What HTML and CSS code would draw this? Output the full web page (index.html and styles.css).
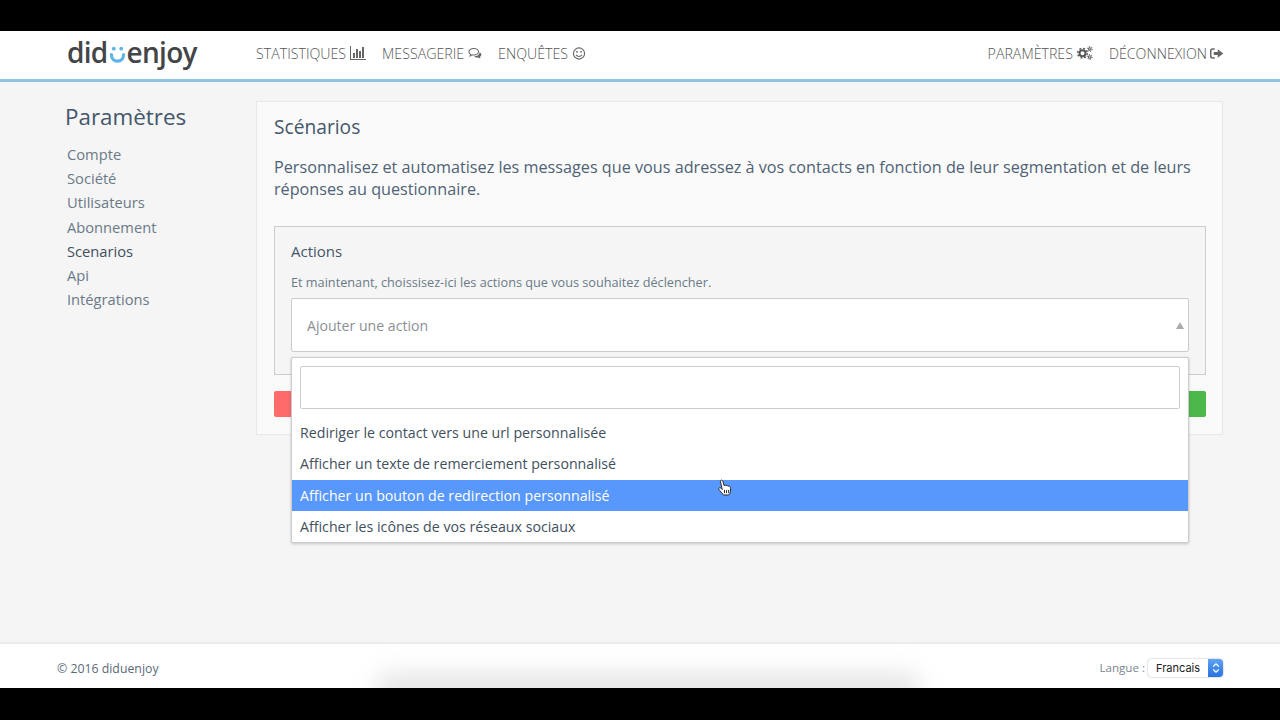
FILE: index.html
```html
<!DOCTYPE html>
<html lang="fr">
<head>
<meta charset="utf-8">
<title>Scénarios</title>
<link rel="stylesheet" href="styles.css">
</head>
<body>
<div class="bar-top"></div>
<header class="header">
  <a class="logo">did<svg class="logo-u" viewBox="0 0 16 16" width="17" height="17"><circle cx="4.500" cy="2.500" r="1.800" fill="#5bb5e6"/><circle cx="11.500" cy="2.500" r="1.800" fill="#5bb5e6"/><path d="M2.300 8c0 3.800 2.300 6.200 5.700 6.200s5.700-2.400 5.700-6.200" fill="none" stroke="#5bb5e6" stroke-width="3" stroke-linecap="round"/></svg>enjoy</a>
  <nav class="nav nav-left">
    <a>Statistiques <svg class="ico" viewBox="0 0 16 14"><path d="M0 0h1v13h15v1H0z M3 7h2v5H3z M6 3h2v9H6z M9 5h2v7H9z M12 1h2v11h-2z" fill="#666"/></svg></a>
    <a>Messagerie <svg class="ico ico-s" viewBox="0 0 16 14"><path d="M6.500 1.200C3.400 1.200 1 2.900 1 5c0 1.200.8 2.300 2 3l-.6 1.800L4.800 8.600c.5.100 1.100.2 1.700.2 3.100 0 5.500-1.700 5.500-3.800s-2.400-3.800-5.500-3.800z" fill="none" stroke="#666" stroke-width="1.200"/><path d="M13 5.500c1.300.6 2.300 1.700 2.300 3 0 1.100-.7 2-1.700 2.600l.6 1.900-2.500-1.300c-2 .3-3.900-.3-5-1.500 3 .3 6.600-1.600 6.300-4.700z" fill="#666"/></svg></a>
    <a>Enquêtes <svg class="ico ico-s" viewBox="0 0 14 14"><circle cx="7" cy="7" r="6" fill="none" stroke="#666" stroke-width="1.200"/><circle cx="4.800" cy="5.200" r="1" fill="#666"/><circle cx="9.200" cy="5.200" r="1" fill="#666"/><path d="M3.800 8.500c1.500 2.200 4.900 2.200 6.400 0" fill="none" stroke="#666" stroke-width="1.100"/></svg></a>
  </nav>
  <nav class="nav nav-right">
    <a>Paramètres <svg class="ico" viewBox="0 0 16 14"><circle cx="5.500" cy="7.200" r="3" fill="none" stroke="#555" stroke-width="2"/><circle cx="5.500" cy="7.200" r="4.800" fill="none" stroke="#555" stroke-width="1.500" stroke-dasharray="1.900 1.870"/><circle cx="12.800" cy="3" r="1.300" fill="none" stroke="#555" stroke-width="1.100"/><circle cx="12.800" cy="3" r="2.500" fill="none" stroke="#555" stroke-width="1" stroke-dasharray="1.100 1.520"/><circle cx="12.800" cy="11" r="1.300" fill="none" stroke="#555" stroke-width="1.100"/><circle cx="12.800" cy="11" r="2.500" fill="none" stroke="#555" stroke-width="1" stroke-dasharray="1.100 1.520"/></svg></a>
    <a class="tight">Déconnexion <svg class="ico ico-s" viewBox="1 0 14 14"><path d="M5.500 2.200H3.200C2 2.200 1.200 3 1.200 4.200v5.600c0 1.200.8 2 2 2h2.300" fill="none" stroke="#666" stroke-width="1.700"/><path d="M4.500 5.300h4.300V2.400L14.800 7l-6 4.600V8.700H4.500z" fill="#666"/></svg></a>
  </nav>
</header>
<div class="main">
  <aside class="side">
    <h2 class="side-title">Paramètres</h2>
    <ul class="side-menu">
      <li>Compte</li>
      <li>Société</li>
      <li>Utilisateurs</li>
      <li>Abonnement</li>
      <li class="current">Scenarios</li>
      <li>Api</li>
      <li>Intégrations</li>
    </ul>
  </aside>
  <section class="panel">
    <h3 class="panel-title">Scénarios</h3>
    <p class="lead">Personnalisez et automatisez les messages que vous adressez à vos contacts en fonction de leur segmentation et de leurs réponses au questionnaire.</p>
    <div class="box">
      <h4 class="box-title">Actions</h4>
      <p class="help">Et maintenant, choissisez-ici les actions que vous souhaitez déclencher.</p>
      <div class="select">
        <span class="placeholder">Ajouter une action</span>
        <span class="caret"></span>
      </div>
      <div class="dropdown">
        <div class="search"></div>
        <ul class="options">
          <li>Rediriger le contact vers une url personnalisée</li>
          <li>Afficher un texte de remerciement personnalisé</li>
          <li class="active">Afficher un bouton de redirection personnalisé</li>
          <li>Afficher les icônes de vos réseaux sociaux</li>
        </ul>
      </div>
    </div>
    <div class="buttons">
      <span class="btn btn-red"></span>
      <span class="btn btn-green"></span>
    </div>
  </section>
</div>
<footer class="footer">
  <span class="copy">© 2016 diduenjoy</span>
  <div class="lang">
    <span class="lang-label">Langue :</span>
    <div class="lang-select"><span class="lang-value">Francais</span><span class="lang-arrows"><svg viewBox="0 0 8 12" width="8" height="12"><path d="M1.200 4.500L4 1.800l2.800 2.700M1.200 7.500L4 10.200l2.800-2.700" fill="none" stroke="#fff" stroke-width="1.300"/></svg></span></div>
  </div>
  <div class="footer-shadow"></div>
</footer>
<div class="bar-bottom"></div>
<svg class="cursor" viewBox="0 0 16 20" width="15" height="19"><path d="M4.200 1.200c.9-.5 1.700 0 2 .9l1.300 4.700 1.800-.3 1.700.4 1.700.6c1.100.4 1.800 1.200 1.800 2.300l-.2 3.500c-.2 1.500-.8 2.700-1.700 3.600H6.800c-.9-1.300-2.600-3.300-4.300-5.300-.8-.9-.8-1.700-.2-2.200.7-.5 1.600-.2 2.400.6L5.600 11 3.700 3c-.2-.8-.1-1.400.5-1.800z" fill="#fff" stroke="#222" stroke-width="1"/><path d="M8 11.500v3.500M10.200 11.500v3.500M12.400 11.500v3.500" stroke="#222" stroke-width="1"/></svg>
</body>
</html>
```

FILE: styles.css
```css
* { box-sizing: border-box; }
html, body { margin: 0; padding: 0; }
body {
  width: 1280px;
  height: 720px;
  overflow: hidden;
  display: flex;
  flex-direction: column;
  position: relative;
  background: #f5f5f5;
  font-family: "Open Sans", "Noto Sans", sans-serif;
  color: #4a5a6a;
}
ul { list-style: none; margin: 0; padding: 0; }
h2, h3, h4, p { margin: 0; font-weight: 400; }

.bar-top { height: 31px; background: #000; flex: none; }
.bar-bottom { height: 32px; background: #000; flex: none; }

.header {
  flex: none;
  height: 51px;
  background: #fff;
  border-bottom: 3px solid #90c2e2;
  display: flex;
  align-items: center;
  padding: 0 56px 4px 67px;
}
.logo {
  width: 189px;
  font-size: 28px;
  font-weight: 600;
  letter-spacing: -0.7px;
  color: #444547;
  display: flex;
  align-items: baseline;
  line-height: 1;
  margin-top: -2px;
}
.logo-u { margin: 0 1px 0 1px; }
.nav { display: flex; gap: 16px; font-size: 14.200px; font-weight: 300; color: #555; text-transform: uppercase; }
.nav a { display: flex; align-items: center; gap: 4px; white-space: nowrap; }
.nav a.tight { gap: 3px; }
.nav-right { margin-left: auto; gap: 16px; }
.ico { width: 16px; height: 14px; }
.ico-s { width: 14px; height: 13px; }

.main { flex: 1; display: flex; padding: 20px 57px 0 65px; align-items: flex-start; }
.side { width: 191px; flex: none; }
.side-title { font-size: 22.400px; line-height: 30px; color: #44566a; }
.side-menu { margin: 10px 0 0 2px; font-size: 14.700px; line-height: 24.200px; color: #6a7a88; }
.side-menu .current { color: #3f4f5e; }

.panel {
  width: 967px;
  height: 334px;
  margin-top: -1px;
  background: #fafafa;
  border: 1px solid #e8e8e8;
  padding: 0 16px 0 17px;
}
.panel-title { font-size: 19.200px; line-height: 26px; margin-top: 12px; color: #44566a; }
.lead { font-size: 16.200px; line-height: 22px; margin-top: 16px; color: #4f6275; }
.box {
  position: relative;
  height: 149px;
  margin-top: 26px;
  background: #f5f5f5;
  border: 1px solid #ccc;
  padding: 0 16px;
}
.box-title { font-size: 15px; line-height: 20px; margin-top: 14px; color: #44566a; }
.help { font-size: 12.700px; line-height: 18px; margin-top: 12px; color: #6a7a88; }
.select {
  height: 54px;
  margin-top: 7px;
  background: #fff;
  border: 1px solid #ccc;
  border-radius: 2px;
  display: flex;
  align-items: center;
  justify-content: space-between;
  padding: 0 4px 0 15px;
}
.placeholder { font-size: 14.100px; color: #8a8f94; }
.caret {
  width: 0;
  height: 0;
  border-left: 4px solid transparent;
  border-right: 4px solid transparent;
  border-bottom: 7px solid #aaa;
}
.dropdown {
  position: absolute;
  left: 16px;
  top: 130px;
  width: 898px;
  height: 186px;
  background: #fff;
  border: 1px solid #ccc;
  border-radius: 2px;
  box-shadow: 0 1px 3px rgba(0,0,0,.2);
  padding: 8px 0 0;
  z-index: 5;
}
.search {
  height: 43px;
  margin: 0 8px;
  background: #fff;
  border: 1px solid #ccc;
  border-radius: 2px;
}
.options { margin-top: 8px; font-size: 14.200px; color: #3f4f5e; }
.options li { height: 31.400px; line-height: 31.400px; padding-left: 8px; }
.options .active { background: #5897fb; color: #fff; font-weight: 500; }

.buttons { display: flex; justify-content: space-between; margin-top: 16px; }
.btn { width: 100px; height: 26px; border-radius: 2px; }
.btn-red { background: #ff6b6b; }
.btn-green { background: #4cb84c; }

.footer {
  flex: none;
  height: 46px;
  background: #fff;
  border-top: 2px solid #ececec;
  position: relative;
  overflow: hidden;
  display: flex;
  align-items: center;
  justify-content: space-between;
  padding: 4px 57px 0;
  font-size: 12.300px;
  color: #5a6a78;
}
.footer-shadow {
  position: absolute;
  left: 378px;
  width: 540px;
  bottom: -16px;
  height: 30px;
  background: #e4e4e4;
  filter: blur(12px);
}
.lang { display: flex; align-items: center; gap: 3px; color: #7a838c; }
.lang-label { font-size: 11.600px; margin-top: -1px; }
.lang-select {
  display: flex;
  width: 75px;
  height: 18px;
  background: #fff;
  border-radius: 4px;
  box-shadow: 0 0 2px rgba(0,0,0,.35);
  font-family: Inter, "Liberation Sans", sans-serif;
  font-size: 11px;
  line-height: 18px;
  color: #222;
  overflow: hidden;
}
.lang-value { flex: 1; padding-left: 8px; }
.lang-arrows {
  width: 15px;
  background: linear-gradient(#5ea2f5, #2a72e0);
  display: flex;
  align-items: center;
  justify-content: center;
}
.cursor { position: absolute; left: 717px; top: 479px; z-index: 10; }
```
